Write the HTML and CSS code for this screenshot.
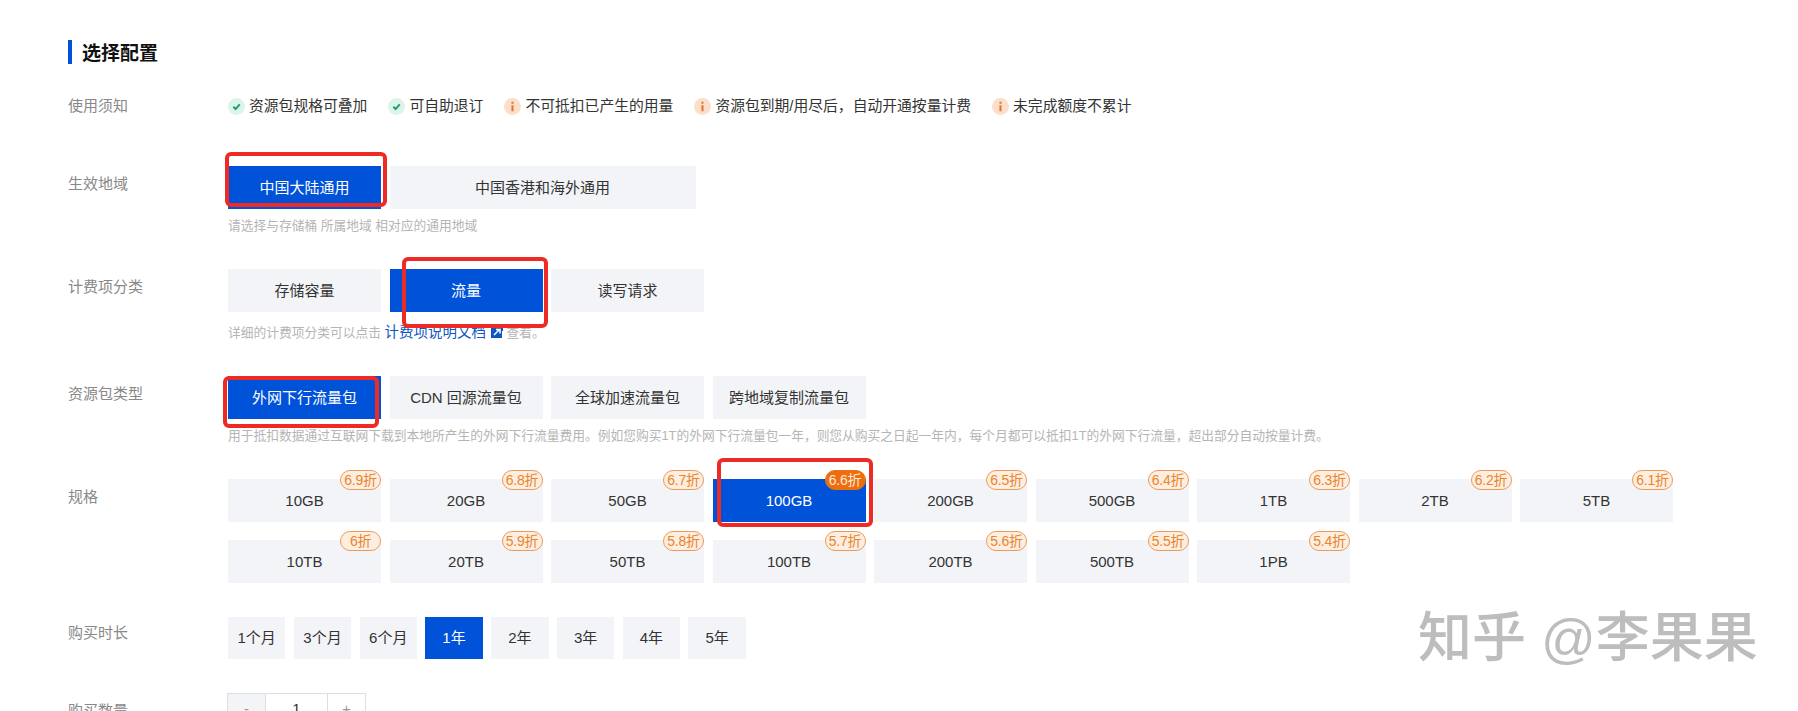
FILE: index.html
```html
<!DOCTYPE html>
<html lang="zh-CN">

<head>
    <meta charset="UTF-8">
    <meta name="viewport" content="width=device-width, initial-scale=1.0">
    <title>选择配置</title>
    <link rel="stylesheet" href="styles.css">
</head>

<body>
    <h2 class="section-title">选择配置</h2>

    <!-- 使用须知 -->
    <div class="row notice-row">
        <div class="row-label">使用须知</div>
        <div class="notice-list">
            <span class="notice-item">
                <svg class="notice-icon" viewBox="0 0 16 16"><circle cx="8" cy="8" r="8" fill="#dcf4ea"/><path d="M5 8.2l2.2 2.2L11 6" fill="none" stroke="#1f9d6c" stroke-width="1.8"/></svg>
                资源包规格可叠加
            </span>
            <span class="notice-item">
                <svg class="notice-icon" viewBox="0 0 16 16"><circle cx="8" cy="8" r="8" fill="#dcf4ea"/><path d="M5 8.2l2.2 2.2L11 6" fill="none" stroke="#1f9d6c" stroke-width="1.8"/></svg>
                可自助退订
            </span>
            <span class="notice-item">
                <svg class="notice-icon" viewBox="0 0 16 16"><circle cx="8" cy="8" r="8" fill="#fbdfca"/><path d="M7 3.5h2v2H7zM7 6.8h2v5.7H7z" fill="#e8772e"/></svg>
                不可抵扣已产生的用量
            </span>
            <span class="notice-item">
                <svg class="notice-icon" viewBox="0 0 16 16"><circle cx="8" cy="8" r="8" fill="#fbdfca"/><path d="M7 3.5h2v2H7zM7 6.8h2v5.7H7z" fill="#e8772e"/></svg>
                资源包到期/用尽后，自动开通按量计费
            </span>
            <span class="notice-item">
                <svg class="notice-icon" viewBox="0 0 16 16"><circle cx="8" cy="8" r="8" fill="#fbdfca"/><path d="M7 3.5h2v2H7zM7 6.8h2v5.7H7z" fill="#e8772e"/></svg>
                未完成额度不累计
            </span>
        </div>
    </div>

    <!-- 生效地域 -->
    <div class="row">
        <div class="row-label">生效地域</div>
        <div>
            <div class="option-line">
                <div class="option active">中国大陆通用<i class="mark mark-region"></i></div>
                <div class="option option-wide">中国香港和海外通用</div>
            </div>
            <p class="hint">请选择与存储桶 所属地域 相对应的通用地域</p>
        </div>
    </div>

    <!-- 计费项分类 -->
    <div class="row">
        <div class="row-label">计费项分类</div>
        <div>
            <div class="option-grid">
                <div class="option">存储容量</div>
                <div class="option active">流量<i class="mark mark-traffic"></i></div>
                <div class="option">读写请求</div>
            </div>
            <p class="hint hint-link-line">详细的计费项分类可以点击 <a class="doc-link" href="#">计费项说明文档<svg class="link-icon" viewBox="0 0 12 12"><path d="M0 1h11v11H0z" fill="#0f58c4"/><path d="M8 1h4v4h-1V2H8z" fill="#0f58c4"/><path d="M3 9l5-5M5 3.5h4v4" fill="none" stroke="#fff" stroke-width="1.5"/></svg></a> 查看。</p>
        </div>
    </div>

    <!-- 资源包类型 -->
    <div class="row">
        <div class="row-label">资源包类型</div>
        <div>
            <div class="option-grid">
                <div class="option active">外网下行流量包<i class="mark mark-type"></i></div>
                <div class="option">CDN 回源流量包</div>
                <div class="option">全球加速流量包</div>
                <div class="option">跨地域复制流量包</div>
            </div>
            <p class="hint">用于抵扣数据通过互联网下载到本地所产生的外网下行流量费用。例如您购买1T的外网下行流量包一年，则您从购买之日起一年内，每个月都可以抵扣1T的外网下行流量，超出部分自动按量计费。</p>
        </div>
    </div>

    <!-- 规格 -->
    <div class="row">
        <div class="row-label">规格</div>
        <div class="option-grid">
            <div class="option">10GB<span class="tag">6.9折</span></div>
            <div class="option">20GB<span class="tag">6.8折</span></div>
            <div class="option">50GB<span class="tag">6.7折</span></div>
            <div class="option active">100GB<span class="tag">6.6折</span><i class="mark mark-spec"></i></div>
            <div class="option">200GB<span class="tag">6.5折</span></div>
            <div class="option">500GB<span class="tag">6.4折</span></div>
            <div class="option">1TB<span class="tag">6.3折</span></div>
            <div class="option">2TB<span class="tag">6.2折</span></div>
            <div class="option">5TB<span class="tag">6.1折</span></div>
            <div class="option">10TB<span class="tag">6折</span></div>
            <div class="option">20TB<span class="tag">5.9折</span></div>
            <div class="option">50TB<span class="tag">5.8折</span></div>
            <div class="option">100TB<span class="tag">5.7折</span></div>
            <div class="option">200TB<span class="tag">5.6折</span></div>
            <div class="option">500TB<span class="tag">5.5折</span></div>
            <div class="option">1PB<span class="tag">5.4折</span></div>
        </div>
    </div>

    <!-- 购买时长 -->
    <div class="row">
        <div class="row-label row-label-short">购买时长</div>
        <div class="duration-list">
            <div class="duration">1个月</div>
            <div class="duration">3个月</div>
            <div class="duration">6个月</div>
            <div class="duration active">1年</div>
            <div class="duration">2年</div>
            <div class="duration">3年</div>
            <div class="duration">4年</div>
            <div class="duration">5年</div>
        </div>
    </div>

    <!-- 购买数量 -->
    <div class="row">
        <div class="row-label">购买数量</div>
        <div class="stepper">
            <div class="step-btn step-minus">-</div>
            <div class="step-value">1</div>
            <div class="step-btn">+</div>
        </div>
    </div>

    <div class="watermark">知乎 @李果果</div>
</body>

</html>
```

FILE: styles.css
```css
html,
body {
    height: 711px;
    overflow: hidden;
}

body {
    margin: 0;
    padding: 40px 0 0 68px;
    box-sizing: border-box;
    background-color: #fff;
    color: #333;
    font-family: "Liberation Sans", "Noto Sans CJK SC", sans-serif;
    font-size: 15px;
    position: relative;
}

.section-title {
    margin: 0 0 31px;
    height: 24px;
    line-height: 28px;
    padding-left: 10px;
    border-left: 4px solid #0052d9;
    font-size: 19px;
    font-weight: bold;
    color: #111;
}

.row {
    display: grid;
    grid-template-columns: 160px 1fr;
    margin-bottom: 34px;
}

.notice-row {
    margin-bottom: 49px;
}

.row-label {
    padding-top: 7px;
    line-height: 22px;
    color: #888;
}

.notice-row .row-label {
    padding-top: 0;
}

.row-label-short {
    padding-top: 5px;
}

.notice-list {
    display: flex;
    gap: 21px;
    line-height: 22px;
    font-size: 14.8px;
}

.notice-item {
    display: flex;
    align-items: center;
    gap: 4px;
    color: #333;
}

.notice-icon {
    width: 17px;
    height: 17px;
}

.option-line {
    display: flex;
    gap: 8.5px;
}

.option-grid {
    display: grid;
    grid-template-columns: repeat(9, 153px);
    gap: 18px 8.5px;
}

.option {
    position: relative;
    height: 43px;
    width: 153px;
    line-height: 43px;
    text-align: center;
    background-color: #f3f4f7;
    color: #333;
}

.option-wide {
    width: 306px;
}

.option.active,
.duration.active {
    background-color: #0052d9;
    color: #fff;
}

.tag {
    position: absolute;
    top: -9px;
    right: 0;
    width: 39px;
    height: 18px;
    line-height: 18px;
    border: 1px solid #eb9a5c;
    border-radius: 10px;
    background-color: #fdeee0;
    color: #e8852f;
    font-size: 14px;
    letter-spacing: -0.3px;
    text-align: center;
}

.option.active .tag {
    background-color: #ed6d0f;
    border-color: #ed6d0f;
    color: #fde9d8;
}

/* 红色标注框 */
.mark {
    position: absolute;
    box-sizing: border-box;
    border: 4px solid #ee2a24;
    border-radius: 6px;
}

.mark-region {
    left: -3px;
    top: -14px;
    width: 162px;
    height: 55px;
}

.mark-traffic {
    left: 12px;
    top: -12px;
    width: 146px;
    height: 71px;
}

.mark-type {
    left: -5px;
    top: 0;
    width: 156px;
    height: 52px;
}

.mark-spec {
    left: 4px;
    top: -21px;
    width: 156px;
    height: 69px;
}

.hint {
    margin: 8px 0 0;
    line-height: 18px;
    font-size: 12.75px;
    color: #b5b5b5;
}

.hint-link-line {
    margin-top: 11px;
}

.doc-link {
    color: #0f58c4;
    font-size: 14.5px;
    text-decoration: none;
}

.link-icon {
    width: 12px;
    height: 12px;
    margin-left: 5px;
    vertical-align: -1px;
}

.duration-list {
    display: flex;
    gap: 8.4px;
}

.duration {
    width: 57.4px;
    height: 42px;
    line-height: 42px;
    text-align: center;
    background-color: #f3f4f7;
}

.stepper {
    display: flex;
    width: 139px;
    height: 42px;
    margin-left: -1px;
    line-height: 30px;
    box-sizing: border-box;
    border: 1px solid #dcdee3;
    text-align: center;
}

.step-btn {
    width: 37px;
    color: #999;
}

.step-minus {
    background-color: #f3f4f7;
}

.step-value {
    flex: 1;
    border-left: 1px solid #dcdee3;
    border-right: 1px solid #dcdee3;
}

.watermark {
    position: absolute;
    left: 1418px;
    top: 606px;
    font-size: 54px;
    line-height: 64px;
    font-weight: 500;
    color: #bdbdbd;
    white-space: nowrap;
}
```
